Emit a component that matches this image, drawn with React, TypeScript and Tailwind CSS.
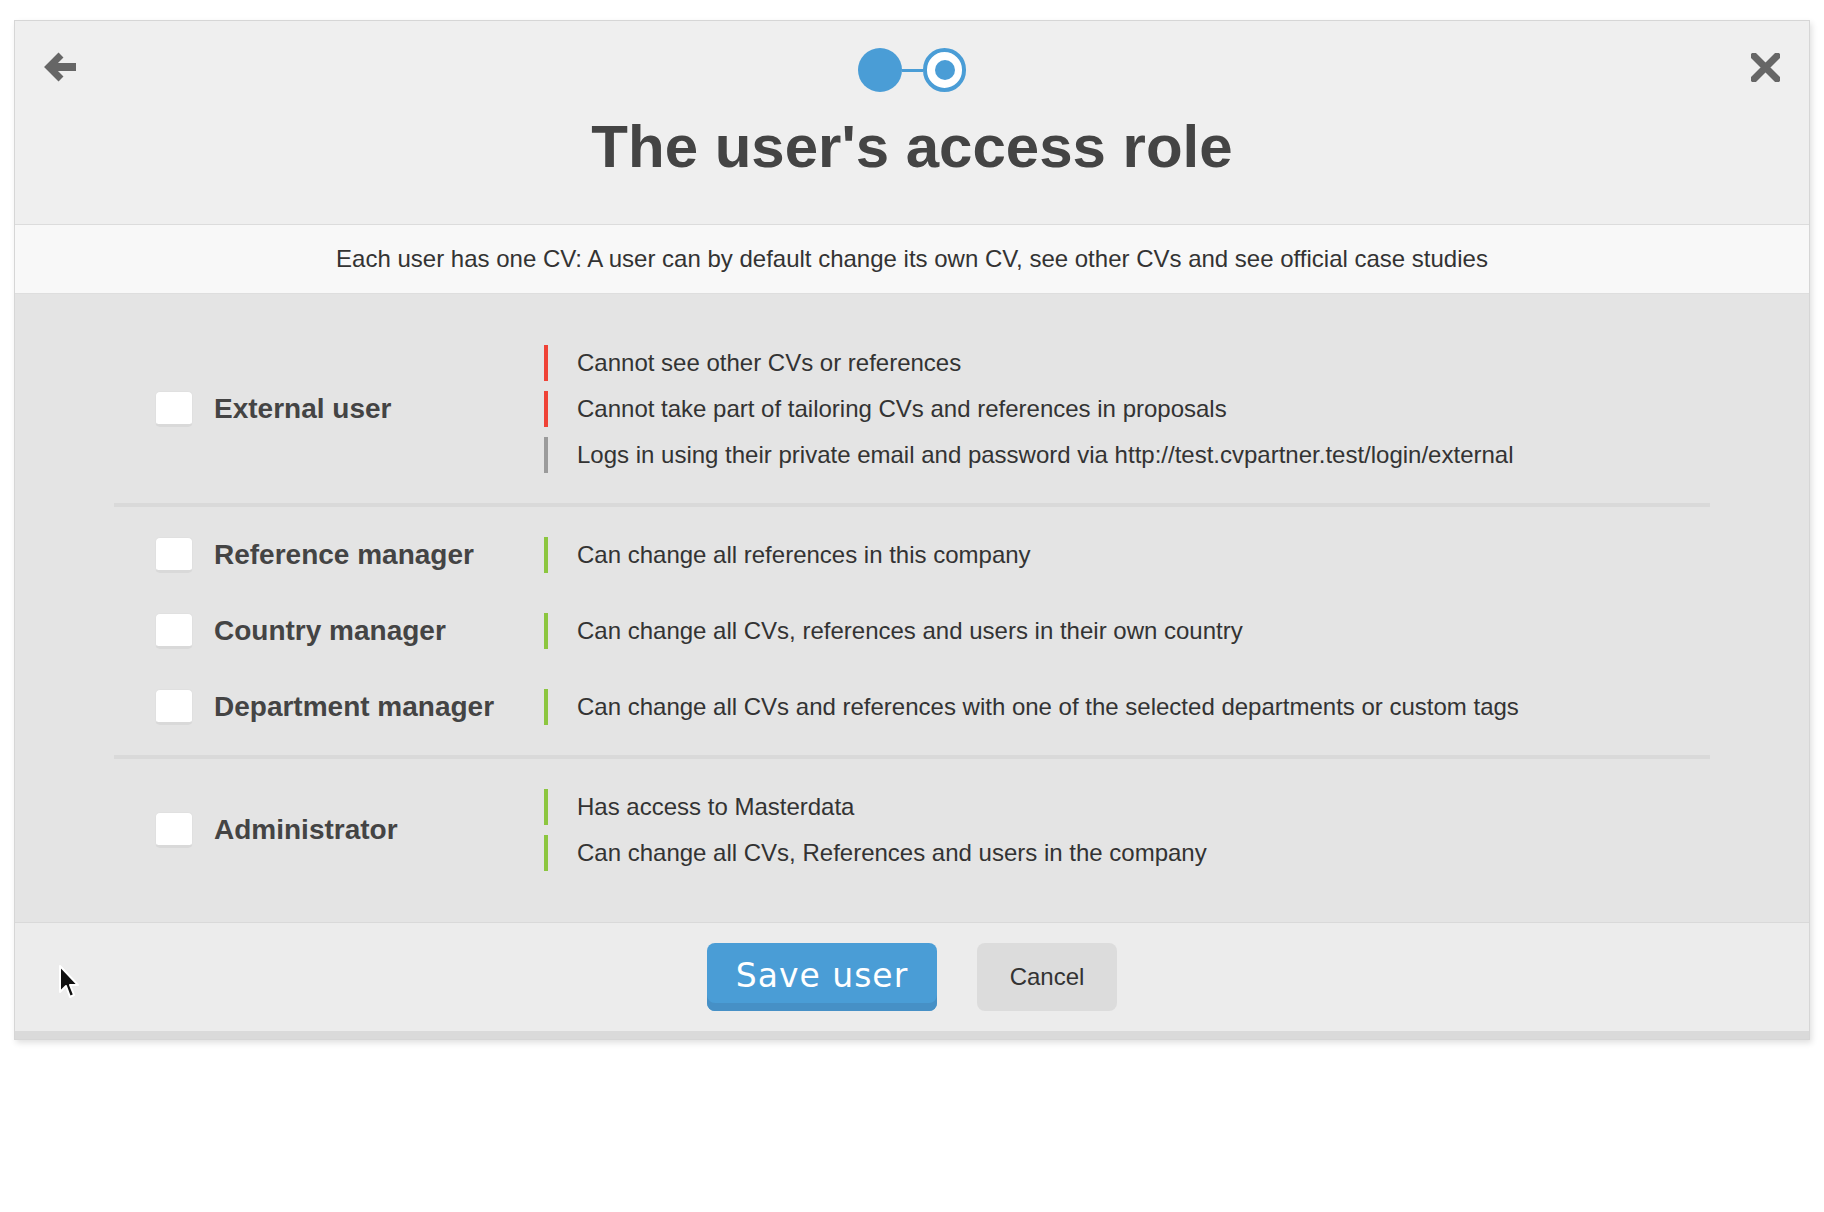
type Line = { text: string; tone: 'red' | 'gray' | 'green' };
type Role = { name: string; lines: Line[] };

const groups: Role[][] = [
  [
    {
      name: 'External user',
      lines: [
        { text: 'Cannot see other CVs or references', tone: 'red' },
        { text: 'Cannot take part of tailoring CVs and references in proposals', tone: 'red' },
        {
          text: 'Logs in using their private email and password via http://test.cvpartner.test/login/external',
          tone: 'gray',
        },
      ],
    },
  ],
  [
    {
      name: 'Reference manager',
      lines: [{ text: 'Can change all references in this company', tone: 'green' }],
    },
    {
      name: 'Country manager',
      lines: [{ text: 'Can change all CVs, references and users in their own country', tone: 'green' }],
    },
    {
      name: 'Department manager',
      lines: [
        {
          text: 'Can change all CVs and references with one of the selected departments or custom tags',
          tone: 'green',
        },
      ],
    },
  ],
  [
    {
      name: 'Administrator',
      lines: [
        { text: 'Has access to Masterdata', tone: 'green' },
        { text: 'Can change all CVs, References and users in the company', tone: 'green' },
      ],
    },
  ],
];

const barColor = (tone: Line['tone']) => {
  switch (tone) {
    case 'red':
      return 'bg-[#ef4236]';
    case 'gray':
      return 'bg-[#9b9b9b]';
    default:
      return 'bg-[#8cc63f]';
  }
};

function RoleRow({ role }: { role: Role }) {
  return (
    <div className="flex items-center">
      <div className="w-[430px] pl-[41px] flex items-center gap-[21px]">
        <div className="w-[38px] h-[36px] bg-white rounded-[5px] border border-[#e0e0e0] border-b-[3px] border-b-[#d9d9d9]" />
        <span className="text-[28px] leading-[36px] font-bold text-[#444]">{role.name}</span>
      </div>
      <div className="flex flex-col gap-[10px]">
        {role.lines.map((line, i) => (
          <div key={i} className="flex items-center h-[36px]">
            <div className={`w-[4px] h-[36px] ${barColor(line.tone)}`} />
            <span className="pl-[29px] text-[24px] leading-[36px] text-[#333]">{line.text}</span>
          </div>
        ))}
      </div>
    </div>
  );
}

export default function App() {
  return (
    <div
      className="min-h-screen bg-white pt-[20px] px-[14px]"
      style={{ fontFamily: '"Liberation Sans", Arial, sans-serif' }}
    >
      <div className="w-[1796px] border border-[#d6d6d6] shadow-[2px_3px_6px_rgba(0,0,0,0.12)]">
        {/* Header */}
        <div className="relative h-[204px] bg-[#efefef] border-b border-[#dcdcdc] pt-[27px]">
          <button className="absolute left-[29px] top-[31px]">
            <svg width="33" height="30" viewBox="0 0 33 30">
              <path d="M17 3 L5 15 L17 27" fill="none" stroke="#666" strokeWidth="7" strokeLinejoin="miter" />
              <path d="M6 15 H32" stroke="#666" strokeWidth="8" />
            </svg>
          </button>
          <button className="absolute right-[29px] top-[32px]">
            <svg width="29" height="29" viewBox="0 0 29 29">
              <path d="M3 3 L26 26 M26 3 L3 26" stroke="#666" strokeWidth="7" strokeLinecap="round" />
            </svg>
          </button>
          <div className="flex items-center justify-center">
            <div className="w-[44px] h-[44px] rounded-full bg-[#4a9dd6]" />
            <div className="w-[21px] h-[3px] bg-[#4a9dd6]" />
            <div className="w-[43px] h-[44px] rounded-full border-[4px] border-[#4a9dd6] bg-white flex items-center justify-center">
              <div className="w-[20px] h-[20px] rounded-full bg-[#4a9dd6]" />
            </div>
          </div>
          <h1 className="mt-[25px] text-center text-[60px] leading-[60px] font-bold text-[#444]">
            The user's access role
          </h1>
        </div>

        {/* Info bar */}
        <div className="h-[69px] bg-[#f8f8f8] border-b border-[#dedede] flex items-center justify-center">
          <p className="text-[24px] text-[#333]">
            Each user has one CV: A user can by default change its own CV, see other CVs and see official case studies
          </p>
        </div>

        {/* Roles */}
        <div className="bg-[#e4e4e4] pt-[21px] pb-[21px] px-[99px]">
          {groups.map((group, gi) => (
            <div key={gi}>
              {gi > 0 && <div className="h-[4px] bg-[#d9d9d9]" />}
              <div className="py-[30px] flex flex-col gap-[40px]">
                {group.map((role) => (
                  <RoleRow key={role.name} role={role} />
                ))}
              </div>
            </div>
          ))}
        </div>

        {/* Footer */}
        <div className="relative h-[109px] bg-[#ececec] border-t border-[#d9d9d9] flex items-center justify-center gap-[40px]">
          <svg
            className="absolute left-[43px] top-[41px]"
            width="22"
            height="36"
            viewBox="0 0 22 36"
          >
            <path
              d="M2 2 L2 28 L8 22 L12 33 L16 31 L12 21 L20 21 Z"
              fill="#111"
              stroke="#fff"
              strokeWidth="2"
              strokeLinejoin="round"
            />
          </svg>
          <button
            className="w-[230px] h-[68px] rounded-[8px] bg-[#4a9dd6] shadow-[inset_0_-8px_0_#4690c6] pb-[3px] text-white text-[33px] tracking-[1px]"
            style={{ fontFamily: '"DejaVu Sans", sans-serif' }}
          >
            Save user
          </button>
          <button className="w-[140px] h-[68px] rounded-[8px] bg-[#dcdcdc] text-[24px] text-[#333]">
            Cancel
          </button>
        </div>
        <div className="h-[8px] bg-[#dadada]" />
      </div>
    </div>
  );
}
